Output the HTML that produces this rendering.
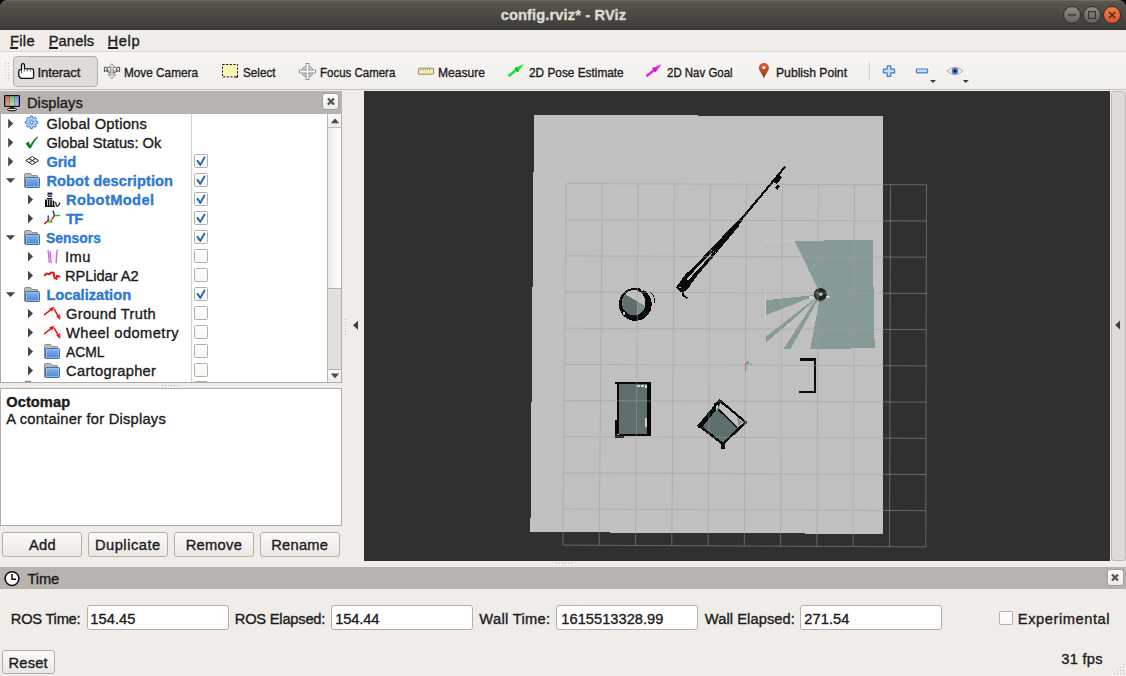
<!DOCTYPE html>
<html>
<head>
<meta charset="utf-8">
<title>config.rviz* - RViz</title>
<style>
*{box-sizing:border-box;margin:0;padding:0}
html,body{width:1126px;height:676px;overflow:hidden;background:#f0ece8}
body{font-family:"Liberation Sans",sans-serif;font-size:14.67px;color:#1b1b1b;position:relative}
.a{position:absolute}
.t{position:absolute;white-space:nowrap;line-height:19px;height:19px;-webkit-text-stroke:0.35px currentColor}
#title{left:0;top:0;width:1126px;height:30px;border-radius:7px 7px 0 0;background:linear-gradient(#5e5b53 0,#55524b 12%,#3f3e3a 92%,#3a3935 100%);border-top:1px solid #6d6a62}
.wb{border-radius:50%;width:18px;height:18px;top:6px;border:1px solid #2f2e2a;background:linear-gradient(#918f88,#605e57)}
#menu{left:0;top:30px;width:1126px;height:22px;background:#f0ece8;border-bottom:1px solid #dcd8d3}
#toolbar{left:0;top:52px;width:1126px;height:38px;background:linear-gradient(#f8f6f4,#f1efeb);border-bottom:1px solid #c4c0ba}
.hd{background:#b7b3af}
#tree{left:0;top:114px;width:342px;height:269px;background:#fff;border-left:1px solid #b0aca7;border-bottom:1px solid #b0aca7;border-right:1px solid #b0aca7;overflow:hidden}
.chk{position:absolute;left:193px;width:14px;height:14px;border:1px solid #b3afaa;border-radius:1.5px;background:linear-gradient(#fff,#f8f7f6)}
.closeb{position:absolute;width:17px;height:17px;border:1px solid #a39f9a;border-radius:3px;background:linear-gradient(#fefefe,#eceae8)}
.btn{position:absolute;top:532px;height:25px;width:80px;border:1px solid #b3aea8;border-radius:3px;background:linear-gradient(#fcfbfa,#eae7e3)}
.inp{position:absolute;top:605px;height:25px;width:142px;border:1px solid #b3afa9;border-radius:3px;background:#fff}
</style>
</head>
<body>
<div class="a" style="left:0;top:0;width:1126px;height:30px;background:#000"></div>
<div class="a" id="title"></div>
<div class="a wb" style="left:1063px"></div><div class="a wb" style="left:1083px"></div><div class="a wb" style="left:1103px;background:linear-gradient(#f47c4c,#df5226)"></div>
<svg class="a" style="left:1060px;top:0" width="66" height="30" viewBox="1060 0 66 30"><rect x="1068" y="14.2" width="8" height="1.5" fill="#3a3935"/><rect x="1088.6" y="11.6" width="6.8" height="6.8" fill="none" stroke="#3a3935" stroke-width="1.3"/><path d="M1109,11.9 L1115.2,18 M1115.2,11.9 L1109,18" stroke="#3a2a20" stroke-width="1.4"/></svg>
<div class="a" id="menu"></div>
<div class="a" id="toolbar"></div>
<svg class="a" style="left:0;top:52px" width="1126" height="38" viewBox="0 52 1126 38"><defs><linearGradient id="pin" x1="0" y1="0" x2="0" y2="1"><stop offset="0" stop-color="#e35a2e"/><stop offset="0.55" stop-color="#b9481f"/><stop offset="1" stop-color="#6e3414"/></linearGradient><linearGradient id="bl" x1="0" y1="0" x2="0" y2="1"><stop offset="0" stop-color="#7fb0ea"/><stop offset="1" stop-color="#4a86d4"/></linearGradient></defs><rect x="5" y="63" width="1" height="1" fill="#c9c5c0"/><rect x="5" y="66" width="1" height="1" fill="#c9c5c0"/><rect x="5" y="69" width="1" height="1" fill="#c9c5c0"/><rect x="5" y="72" width="1" height="1" fill="#c9c5c0"/><rect x="5" y="75" width="1" height="1" fill="#c9c5c0"/><rect x="5" y="78" width="1" height="1" fill="#c9c5c0"/><rect x="8" y="63" width="1" height="1" fill="#c9c5c0"/><rect x="8" y="66" width="1" height="1" fill="#c9c5c0"/><rect x="8" y="69" width="1" height="1" fill="#c9c5c0"/><rect x="8" y="72" width="1" height="1" fill="#c9c5c0"/><rect x="8" y="75" width="1" height="1" fill="#c9c5c0"/><rect x="8" y="78" width="1" height="1" fill="#c9c5c0"/><rect x="13.5" y="56.5" width="84" height="30" rx="3.5" fill="#dfdbd8" stroke="#b5b1ac"/><path d="M21.5,69.7 V65 Q21.5,63.6 23,63.6 Q24.5,63.6 24.5,65 V68.9 H32.1 Q33.6,68.9 33.6,70.4 V76.9 Q33.6,78.3 32.1,78.3 H20.9 L18.8,76.2 V71.1 Q18.8,69.7 20.3,69.7 Z" fill="#fff" stroke="#0c0c0c" stroke-width="1.3" stroke-linejoin="round"/><path d="M24.3,69.4 V71.7 M27.4,69.6 V71.7 M30.5,69.6 V71.7" stroke="#666" stroke-width="1" fill="none"/><path d="M21.6,69.9 V73.4" stroke="#444" stroke-width="1" fill="none"/><g stroke-linejoin="round"><path d="M104.4,67.3 H107.2 V71.2 L105.6,70.6 L104.4,72 Z" fill="#fafafa" stroke="#4e4e4e" stroke-width="1"/><path d="M119.6,67.3 H116.8 V71.2 L118.4,70.6 L119.6,72 Z" fill="#fafafa" stroke="#4e4e4e" stroke-width="1"/><ellipse cx="112" cy="68.7" rx="4.6" ry="2.3" fill="none" stroke="#6a6a6a" stroke-width="1" stroke-dasharray="1.6,1.2"/><path d="M106.4,70.8 Q112,75 117.6,70.8" fill="none" stroke="#5e5e5e" stroke-width="1.2"/><path d="M111.9,63.7 L115.2,67.5 H113.1 V74.6 H115.6 L111.9,78.8 L108.2,74.6 H110.7 V67.5 H108.6 Z" fill="#ededed" fill-opacity="0.9" stroke="#909090" stroke-width="1"/><rect x="111" y="66.4" width="1.8" height="9" fill="#c4c4c4"/></g><rect x="222.5" y="64.5" width="15" height="12.4" fill="#fbf9b6" stroke="#1a1a1a" stroke-width="1" stroke-dasharray="2.2,1.4"/><polygon points="238,74.6 238,77.4 235.2,77.4" fill="#111"/><g><circle cx="307.5" cy="71.5" r="5.5" fill="#f6f6f6" stroke="#8e8e8e" stroke-width="1.1"/><circle cx="307.5" cy="71.5" r="3.1" fill="none" stroke="#a0a0a0" stroke-width="1.5"/><rect x="306.2" y="63.5" width="2.6" height="16" fill="#fff" stroke="#8a8a8a" stroke-width="1"/><rect x="299.5" y="70.2" width="16" height="2.6" fill="#fff" stroke="#8a8a8a" stroke-width="1"/><rect x="306.7" y="64" width="1.6" height="15" fill="#fff"/><rect x="300" y="70.7" width="15" height="1.6" fill="#fff"/></g><rect x="418.4" y="68.2" width="15.2" height="6" rx="0.8" fill="#f3efb0" stroke="#8b8875" stroke-width="1"/><path d="M421,68.6 V70.6 M423.2,68.6 V70.2 M425.4,68.6 V70.6 M427.6,68.6 V70.2 M429.8,68.6 V70.6" stroke="#8b8875" stroke-width="0.8"/><polygon points="509.2,77.3 516.9,71.2 515.3,69.1 507.6,75.3" fill="#16e838"/><polygon points="517.7,72.2 523.9,63.9 514.5,68.1" fill="#16e838"/><polygon points="517.7,72.2 518.6,71.0 515.8,67.6 514.5,68.1" fill="#0a8a20" fill-opacity="0.75"/><polygon points="647.2,77.3 654.7,71.2 653.1,69.2 645.6,75.3" fill="#f21ee0"/><polygon points="655.6,72.2 661.7,63.9 652.3,68.2" fill="#f21ee0"/><polygon points="655.6,72.2 656.4,71.0 653.6,67.6 652.3,68.2" fill="#8a0a86" fill-opacity="0.75"/><path d="M763.9,63 C760.9,63 758.9,65.2 758.9,67.8 C758.9,71 762.6,74 763.9,78.6 C765.2,74 768.9,71 768.9,67.8 C768.9,65.2 766.9,63 763.9,63 Z" fill="url(#pin)"/><circle cx="763.9" cy="67.6" r="1.7" fill="#fff"/><rect x="869" y="62" width="1" height="19" fill="#cfcbc6"/><rect x="870" y="62" width="1" height="19" fill="#fbfaf9"/><path d="M887.2,65.8 H890.8 V69.2 H894.6 V72.8 H890.8 V76.4 H887.2 V72.8 H883.4 V69.2 H887.2 Z" fill="#c7dcf5" stroke="#3f7cc9" stroke-width="1.2" stroke-linejoin="round"/><rect x="916.4" y="69" width="11.2" height="3.8" rx="0.8" fill="#c7dcf5" stroke="#3f7cc9" stroke-width="1.2"/><polygon points="930,80 936,80 933,83" fill="#3a3a3a"/><path d="M947,71 Q955,63.6 963,71 Q955,78.4 947,71 Z" fill="#f4f4f4" stroke="#a8a8a8" stroke-width="1"/><circle cx="955" cy="71" r="3.3" fill="#4a78c8"/><circle cx="955" cy="71" r="1.5" fill="#1a1a2a"/><polygon points="962.8,80 968.8,80 965.8,83" fill="#3a3a3a"/></svg>
<div class="a" style="left:10px;top:47px;width:8px;height:2px;background:#1b1b1b"></div><div class="a" style="left:49px;top:47px;width:9px;height:2px;background:#1b1b1b"></div><div class="a" style="left:108px;top:47px;width:10px;height:2px;background:#1b1b1b"></div>
<div class="a hd" style="left:0;top:91px;width:342px;height:23px"></div>
<div class="closeb" style="left:322px;top:93px"></div>
<svg class="a" style="left:0;top:91px" width="342" height="23" viewBox="0 91 342 23"><defs><linearGradient id="mr" x1="0" y1="0" x2="0" y2="1"><stop offset="0" stop-color="#c46c6c"/><stop offset="1" stop-color="#ee9494"/></linearGradient><linearGradient id="mg" x1="0" y1="0" x2="0" y2="1"><stop offset="0" stop-color="#6cc06c"/><stop offset="1" stop-color="#a2eca2"/></linearGradient><linearGradient id="mb" x1="0" y1="0" x2="0" y2="1"><stop offset="0" stop-color="#8c8cdc"/><stop offset="1" stop-color="#b4b4fa"/></linearGradient></defs><rect x="4" y="95" width="16" height="12" rx="1.4" fill="#0c0c0c"/><rect x="5.2" y="96.2" width="4.6" height="9.6" fill="url(#mr)"/><rect x="9.8" y="96.2" width="4.5" height="9.6" fill="url(#mg)"/><rect x="14.3" y="96.2" width="4.5" height="9.6" fill="url(#mb)"/><path d="M10,107 H14 L13.2,108.4 H10.8 Z" fill="#0c0c0c"/><ellipse cx="12" cy="109.5" rx="4.6" ry="1.3" fill="#e8e8e8" stroke="#0c0c0c" stroke-width="1"/><path d="M328,98.5 L334,104.5 M334,98.5 L328,104.5" stroke="#555" stroke-width="2.4" stroke-linecap="butt"/></svg>
<div class="a" id="tree"><div class="chk" style="top:40px"></div><div class="chk" style="top:59px"></div><div class="chk" style="top:78px"></div><div class="chk" style="top:97px"></div><div class="chk" style="top:116px"></div><div class="chk" style="top:173px"></div><div class="chk" style="top:135px"></div><div class="chk" style="top:154px"></div><div class="chk" style="top:192px"></div><div class="chk" style="top:211px"></div><div class="chk" style="top:230px"></div><div class="chk" style="top:249px"></div><div class="chk" style="top:267px"></div><svg class="a" style="left:-1px;top:0" width="341" height="269" viewBox="0 0 341 269"><defs><linearGradient id="fg" x1="0" y1="0" x2="0" y2="1"><stop offset="0" stop-color="#8db5e8"/><stop offset="0.5" stop-color="#6b9ddb"/><stop offset="1" stop-color="#4c84cf"/></linearGradient></defs><polygon points="8.2,4.8 13.2,9.6 8.2,14.399999999999999" fill="#454545"/><polygon points="8.2,23.8 13.2,28.6 8.2,33.4" fill="#454545"/><polygon points="8.2,42.800000000000004 13.2,47.6 8.2,52.4" fill="#454545"/><polygon points="5.9,64.3 15.1,64.3 10.5,69.1" fill="#454545"/><polygon points="5.9,121.3 15.1,121.3 10.5,126.1" fill="#454545"/><polygon points="5.9,178.3 15.1,178.3 10.5,183.10000000000002" fill="#454545"/><polygon points="28,80.8 33,85.6 28,90.39999999999999" fill="#454545"/><polygon points="28,99.8 33,104.6 28,109.39999999999999" fill="#454545"/><polygon points="28,137.79999999999998 33,142.6 28,147.4" fill="#454545"/><polygon points="28,156.79999999999998 33,161.6 28,166.4" fill="#454545"/><polygon points="28,194.79999999999998 33,199.6 28,204.4" fill="#454545"/><polygon points="28,213.79999999999998 33,218.6 28,223.4" fill="#454545"/><polygon points="28,232.79999999999998 33,237.6 28,242.4" fill="#454545"/><polygon points="28,251.8 33,256.6 28,261.40000000000003" fill="#454545"/><g transform="translate(24,59)"><path d="M0.5,1.5 Q0.5,0.5 1.5,0.5 H6.5 L8,2.5 H13 Q13.5,2.5 13.5,3.5 V14 H0.5 Z" fill="#b9b9b6" stroke="#8d8d8a" stroke-width="1"/><rect x="1.5" y="4.5" width="14" height="10" rx="1" fill="url(#fg)" stroke="#3a6fb5" stroke-width="1"/><rect x="2.5" y="5.5" width="12" height="8" fill="none" stroke="#a9c8ee" stroke-opacity="0.7" stroke-width="1"/></g><g transform="translate(24,116)"><path d="M0.5,1.5 Q0.5,0.5 1.5,0.5 H6.5 L8,2.5 H13 Q13.5,2.5 13.5,3.5 V14 H0.5 Z" fill="#b9b9b6" stroke="#8d8d8a" stroke-width="1"/><rect x="1.5" y="4.5" width="14" height="10" rx="1" fill="url(#fg)" stroke="#3a6fb5" stroke-width="1"/><rect x="2.5" y="5.5" width="12" height="8" fill="none" stroke="#a9c8ee" stroke-opacity="0.7" stroke-width="1"/></g><g transform="translate(24,173)"><path d="M0.5,1.5 Q0.5,0.5 1.5,0.5 H6.5 L8,2.5 H13 Q13.5,2.5 13.5,3.5 V14 H0.5 Z" fill="#b9b9b6" stroke="#8d8d8a" stroke-width="1"/><rect x="1.5" y="4.5" width="14" height="10" rx="1" fill="url(#fg)" stroke="#3a6fb5" stroke-width="1"/><rect x="2.5" y="5.5" width="12" height="8" fill="none" stroke="#a9c8ee" stroke-opacity="0.7" stroke-width="1"/></g><g transform="translate(44,230)"><path d="M0.5,1.5 Q0.5,0.5 1.5,0.5 H6.5 L8,2.5 H13 Q13.5,2.5 13.5,3.5 V14 H0.5 Z" fill="#b9b9b6" stroke="#8d8d8a" stroke-width="1"/><rect x="1.5" y="4.5" width="14" height="10" rx="1" fill="url(#fg)" stroke="#3a6fb5" stroke-width="1"/><rect x="2.5" y="5.5" width="12" height="8" fill="none" stroke="#a9c8ee" stroke-opacity="0.7" stroke-width="1"/></g><g transform="translate(44,249)"><path d="M0.5,1.5 Q0.5,0.5 1.5,0.5 H6.5 L8,2.5 H13 Q13.5,2.5 13.5,3.5 V14 H0.5 Z" fill="#b9b9b6" stroke="#8d8d8a" stroke-width="1"/><rect x="1.5" y="4.5" width="14" height="10" rx="1" fill="url(#fg)" stroke="#3a6fb5" stroke-width="1"/><rect x="2.5" y="5.5" width="12" height="8" fill="none" stroke="#a9c8ee" stroke-opacity="0.7" stroke-width="1"/></g><g transform="translate(31.5,8.3)"><path d="M-1.12,-4.67 L-0.99,-6.22 L0.99,-6.22 L1.12,-4.67 L2.51,-4.09 L3.70,-5.10 L5.10,-3.70 L4.09,-2.51 L4.67,-1.12 L6.22,-0.99 L6.22,0.99 L4.67,1.12 L4.09,2.51 L5.10,3.70 L3.70,5.10 L2.51,4.09 L1.12,4.67 L0.99,6.22 L-0.99,6.22 L-1.12,4.67 L-2.51,4.09 L-3.70,5.10 L-5.10,3.70 L-4.09,2.51 L-4.67,1.12 L-6.22,0.99 L-6.22,-0.99 L-4.67,-1.12 L-4.09,-2.51 L-5.10,-3.70 L-3.70,-5.10 L-2.51,-4.09 Z" fill="#c3d6f1" stroke="#3d78cf" stroke-width="1" stroke-linejoin="round"/><circle r="2.6" fill="none" stroke="#8fb2e6" stroke-width="1.3"/><circle r="1.5" fill="#fdfdff" stroke="#3d78cf" stroke-width="0.9"/></g><path d="M25.6,29.4 L28.8,27.6 L30.2,31 Q33,25.5 37.6,22.2 L38,23.2 Q33.5,28 30.8,34.2 L29,34.2 Z" fill="#17801b"/><g fill="none" stroke="#222" stroke-width="1"><path d="M25.8,46.6 L32.3,42.6 L38.8,46.6 L32.3,50.6 Z"/><path d="M29,44.6 L35.6,48.6 M35.6,44.6 L29,48.6"/></g><g fill="#111"><rect x="47.6" y="78.6" width="4.6" height="1.4"/><rect x="47" y="80.2" width="5.6" height="1.2" fill="#3b62c4"/><rect x="47.8" y="81.6" width="4" height="1.2"/><rect x="47" y="84" width="5.4" height="1.4"/><rect x="45" y="85.6" width="2.2" height="7.2"/><rect x="48" y="85.6" width="1.4" height="7.2"/><rect x="50.2" y="85.6" width="1.6" height="7.2"/><rect x="52.6" y="86.6" width="1.6" height="6.2"/><rect x="45" y="91.6" width="10" height="1.3"/><path d="M54.6,88.2 Q56.5,88.6 56.2,91 Q56,92.6 57.6,92.2 Q59.4,91.2 60,88.4" fill="none" stroke="#111" stroke-width="1.1"/></g><g fill="none" stroke-width="1.5" stroke-linecap="round"><path d="M53.2,97.2 L54.4,101.4" stroke="#1430e0"/><path d="M54.4,101.6 L59.6,101.6" stroke="#10d020"/><path d="M54.4,101.8 L51,106.4" stroke="#e01818"/><path d="M48.2,102 L48.2,106.4" stroke="#2040f0"/><path d="M48.4,107.4 L52,108" stroke="#10d020"/><path d="M48,106.8 L44.6,109.6" stroke="#f01010"/><path d="M49.6,105.8 L51.2,105" stroke="#f0e020"/></g><g fill="none" stroke="#d357de" stroke-width="1.1"><path d="M48,135.6 L49.2,149"/><path d="M50.2,137 L51.2,149.4"/><path d="M57.2,135.2 L56.2,149.4"/><path d="M49,138 L50.4,148" stroke-opacity="0.5"/><path d="M56.4,138 L55.8,148" stroke-opacity="0.5"/></g><path d="M44.8,161.2 L46.6,159.4 L49.2,160.4 L51,158.6 L53.6,158.8 L54.6,164 L56.4,165 L57,162 L59.6,162.6" fill="none" stroke="#e61212" stroke-width="2" stroke-linejoin="round" stroke-linecap="round"/><g stroke="#e81414" stroke-width="1.5" fill="#e81414" stroke-linecap="round"><path d="M44.6,200.6 L52.4,194.4" fill="none"/><path d="M53.6,193.2 L49.6,194.6 L51.8,197 Z" stroke-width="0.6"/><path d="M54.2,195.2 L59,203.6" fill="none"/><path d="M59.8,205.2 L56.6,202.4 L59.6,200.8 Z" stroke-width="0.6"/></g><g stroke="#e81414" stroke-width="1.5" fill="#e81414" stroke-linecap="round"><path d="M44.6,219.6 L52.4,213.4" fill="none"/><path d="M53.6,212.2 L49.6,213.6 L51.8,216 Z" stroke-width="0.6"/><path d="M54.2,214.2 L59,222.6" fill="none"/><path d="M59.8,224.2 L56.6,221.4 L59.6,219.8 Z" stroke-width="0.6"/></g><rect x="24.8" y="266.8" width="6.4" height="1.4" fill="#8a8a88"/><line x1="191.5" y1="0" x2="191.5" y2="269" stroke="#d4d1cd" stroke-width="1"/><path d="M197.5,46.9 L200.3,50.9 L204.5,43.5" fill="none" stroke="#2364b4" stroke-width="1.9" stroke-linecap="round" stroke-linejoin="round"/><path d="M197.5,65.9 L200.3,69.9 L204.5,62.5" fill="none" stroke="#2364b4" stroke-width="1.9" stroke-linecap="round" stroke-linejoin="round"/><path d="M197.5,84.9 L200.3,88.9 L204.5,81.5" fill="none" stroke="#2364b4" stroke-width="1.9" stroke-linecap="round" stroke-linejoin="round"/><path d="M197.5,103.9 L200.3,107.9 L204.5,100.5" fill="none" stroke="#2364b4" stroke-width="1.9" stroke-linecap="round" stroke-linejoin="round"/><path d="M197.5,122.9 L200.3,126.9 L204.5,119.5" fill="none" stroke="#2364b4" stroke-width="1.9" stroke-linecap="round" stroke-linejoin="round"/><path d="M197.5,179.9 L200.3,183.9 L204.5,176.5" fill="none" stroke="#2364b4" stroke-width="1.9" stroke-linecap="round" stroke-linejoin="round"/></svg><div class="a" style="left:326px;top:0;width:14px;height:268px;background:linear-gradient(90deg,#e9e7e4,#fdfdfc 70%);border-left:1px solid #b8b4af"></div><div class="a" style="left:327px;top:0;width:13px;height:14px;background:linear-gradient(#fbfafa,#eeece9);border-bottom:1px solid #c2beb9"></div><div class="a" style="left:327px;top:255px;width:13px;height:13px;background:linear-gradient(#fbfafa,#eeece9)"></div><div class="a" style="left:327px;top:174px;width:13px;height:82px;background:#e2e0dd;border-top:1px solid #b5b1ab;border-bottom:1px solid #b5b1ab"></div><svg class="a" style="left:326.5px;top:0" width="14" height="268"><polygon points="2.8,9.2 11.2,9.2 7,4.6" fill="#4a4a4a"/><polygon points="2.8,259.6 11.2,259.6 7,264.2" fill="#4a4a4a"/></svg></div>
<svg class="a" style="left:160px;top:384px" width="24" height="3"><g fill="#bab6b1"><rect x="2" y="1" width="1" height="1"/><rect x="5" y="1" width="1" height="1"/><rect x="8" y="1" width="1" height="1"/><rect x="11" y="1" width="1" height="1"/><rect x="14" y="1" width="1" height="1"/><rect x="17" y="1" width="1" height="1"/></g></svg>
<div class="a" style="left:0;top:388px;width:342px;height:138px;background:#fff;border:1px solid #b0aca7"></div>
<div class="btn" style="left:2px"></div><div class="btn" style="left:88px"></div><div class="btn" style="left:174px"></div><div class="btn" style="left:260px"></div>
<svg class="a" style="left:342px;top:91px" width="22" height="470"><g fill="#bab6b1"><rect x="3" y="228" width="1" height="1"/><rect x="3" y="231" width="1" height="1"/><rect x="3" y="234" width="1" height="1"/><rect x="3" y="237" width="1" height="1"/><rect x="3" y="240" width="1" height="1"/><rect x="3" y="243" width="1" height="1"/></g><polygon points="16,229.8 16,238.8 11,234.3" fill="#3c3c3c"/></svg>
<svg class="a" style="left:364px;top:91px" width="746" height="470" viewBox="364 91 746 470">
<rect x="364" y="91" width="746" height="470" fill="#303030"/>
<g shape-rendering="crispEdges">
<polygon points="534,114.8 883.3,116.3 882.6,533.9 530.4,532.1" fill="#c0c0c0"/>
<!-- lidar fan -->
<g fill="#869b98">
<polygon points="820.5,294.5 794.7,240.8 872.6,240 874.7,348 810.2,349.4"/>
<polygon points="819,294.5 765.8,300.3 765.8,315.1"/>
<polygon points="817,297 766,336.6 766,342.5 818,298.5"/>
<polygon points="816,299 783.2,349.4 790.3,349.4 818.5,299"/>
</g>
<!-- diagonal wall -->
<g fill="#0a0a0a" stroke="none">
<polygon points="784.4,166 786,167.3 740.8,221.6 739,220.2"/>
<polygon points="740.8,217.5 743.2,219.6 734.5,230.2 731.8,228"/>
<polygon points="779.4,175 782,177.6 776.8,184.2 773.2,181.6"/>
<polygon points="777.2,184.6 779.8,186 777.6,189.8 775,188.2"/>
<polygon points="736,222 739.8,225 716.4,253 710.4,249.5"/>
<polygon points="709,250 713.6,251 700.9,263.3 691,274.4 681,285.5 676,287.4 685.5,274.4 697.2,263.3 704.4,255.5"/>
<polygon points="713,251.5 716.4,253 707.7,263.3 698.3,274.4 690,285.5 686,283.5 693.3,274.4 703.8,263.3 710.5,255.5"/>
<polygon points="675.8,287.2 686.4,279.4 690.8,283 690,286 685,291 681.4,292.4"/>
<polygon points="681.5,291 683.5,291 684,295 687.8,297.5 686.8,299 682.3,296"/>
</g>
<rect x="679" y="286.8" width="1.6" height="1.4" fill="#c0c0c0"/>
<!-- circle obstacle -->
<clipPath id="cin"><ellipse cx="633.8" cy="302.6" rx="11.7" ry="12.6"/></clipPath>
<ellipse cx="635.3" cy="304.3" rx="16.4" ry="16.5" fill="#0a0a0a"/>
<ellipse cx="633.8" cy="302.6" rx="11.7" ry="12.6" fill="#c0c0c0"/>
<g clip-path="url(#cin)">
<polygon points="615,288.2 625.4,294.3 645.8,306.4 650,320 615,320" fill="#5e6f6e"/>
<polygon points="637.2,301.3 645.8,306.4 648,316 637.2,318" fill="#7a8f8d"/>
</g>
<path d="M650.5,292.5 Q654.8,295.5 654.6,303" fill="none" stroke="#0a0a0a" stroke-width="1.1"/>
<path d="M651.2,294 Q653.6,297 653.4,302" fill="none" stroke="#c0c0c0" stroke-width="1.2"/>
<rect x="622.6" y="312.4" width="2" height="2.6" fill="#c0c0c0"/>
<rect x="640.6" y="289.2" width="2.4" height="1.6" fill="#c0c0c0"/>
<!-- rect obstacle -->
<rect x="617" y="382" width="33" height="54" fill="#5e6f6e"/>
<g fill="#0a0a0a">
<rect x="615.1" y="381.7" width="35.9" height="2.5"/>
<rect x="616.8" y="382" width="2.3" height="54"/>
<rect x="615.1" y="420" width="3.9" height="16.2"/>
<rect x="647.1" y="382" width="3.9" height="54.2"/>
<rect x="615.1" y="433.8" width="35.9" height="2.4"/>
<rect x="615.1" y="436.2" width="9" height="1.5"/>
</g>
<rect x="637.4" y="385.4" width="2.6" height="2" fill="#d4d8d7"/><rect x="641.2" y="385.4" width="2.4" height="2" fill="#d4d8d7"/><rect x="644.6" y="385.4" width="2.5" height="2.4" fill="#d4d8d7"/>
<rect x="645.3" y="418" width="1.8" height="9" fill="#c8cccb"/>
<rect x="617" y="434" width="2" height="1.4" fill="#c0c0c0"/>
<!-- diamond obstacle -->
<polygon points="719.7,400.5 745.6,422.3 722.8,444 699,425.5" fill="#5e6f6e" stroke="#0a0a0a" stroke-width="2.4"/>
<polygon points="720.6,402.6 744,422.3 737.8,427.4 718.6,409.4" fill="#c0c0c0"/>
<polygon points="737,417.5 742.8,422.3 738.2,426.5" fill="#869b98"/>
<line x1="718.6" y1="409.6" x2="737.4" y2="427.6" stroke="#0a0a0a" stroke-width="1.6"/><polygon points="698,425.8 719.2,399.6 721.2,401.4 717.4,408.2 701.8,427.8" fill="#0a0a0a"/>
<polygon points="713.6,404.2 719.7,399.2 726.6,405 721.6,404.6 719.8,402.8 717.4,405 715.6,409" fill="#0a0a0a"/><rect x="716.4" y="404.6" width="1.4" height="5" fill="#d0d4d3" transform="rotate(14 717 407)"/>
<rect x="721.3" y="443" width="3.4" height="6" fill="#0a0a0a"/>
<rect x="697.6" y="423.5" width="4" height="4.5" fill="#0a0a0a"/>
<rect x="744.5" y="420.6" width="2.6" height="3.4" fill="#444"/>
<!-- bracket -->
<path d="M800,359.5 H815 V392.2 H799.4" fill="none" stroke="#0a0a0a" stroke-width="2.2"/>
</g>
<line x1="765.5" y1="291" x2="765.5" y2="321" stroke="#cfcfcf" stroke-width="0.8"/><line x1="765" y1="241.3" x2="795" y2="241" stroke="#d2d2d2" stroke-width="0.7" stroke-dasharray="3,2"/>
<!-- odom line + axes -->
<line x1="746" y1="364" x2="818" y2="297" stroke="#cdcba0" stroke-width="0.9" stroke-opacity="0.85"/>
<line x1="745.6" y1="364" x2="745.6" y2="370.5" stroke="#e0405a" stroke-width="1.2"/>
<line x1="745.6" y1="364" x2="752.5" y2="364" stroke="#38d24a" stroke-width="1.2"/>
<line x1="745.6" y1="364" x2="748.6" y2="361.3" stroke="#e020c0" stroke-width="1.1"/>
<!-- robot -->
<circle cx="820.3" cy="294.4" r="6.4" fill="#242424"/>
<ellipse cx="817.1" cy="294.8" rx="1.5" ry="3.2" fill="#2c5a2c"/>
<rect x="815" y="294" width="0.9" height="1.8" fill="#2a3ea0"/>
<circle cx="820.8" cy="294.3" r="1.8" fill="#c4c4c4"/>
<rect x="809.2" y="296.4" width="4.2" height="1.4" fill="#f0f0f0"/>
<rect x="826.2" y="296.2" width="3.4" height="1.5" fill="#f4f4f4"/>
<polygon points="818.4,300.8 820.4,300.8 819.4,302.4" fill="#e01010"/>
<!-- grid -->
<g stroke="rgb(160,160,164)" stroke-opacity="0.5" stroke-width="1"><line x1="566.3" y1="183.6" x2="562.9" y2="545.1"/><line x1="566.3" y1="183.6" x2="926.5" y2="184.8"/><line x1="602.3" y1="183.7" x2="599.2" y2="545.3"/><line x1="566.0" y1="219.8" x2="926.4" y2="221.0"/><line x1="638.3" y1="183.8" x2="635.5" y2="545.5"/><line x1="565.6" y1="255.9" x2="926.4" y2="257.2"/><line x1="674.4" y1="184.0" x2="671.8" y2="545.6"/><line x1="565.3" y1="292.1" x2="926.3" y2="293.4"/><line x1="710.4" y1="184.1" x2="708.1" y2="545.8"/><line x1="564.9" y1="328.2" x2="926.2" y2="329.6"/><line x1="746.4" y1="184.2" x2="744.3" y2="546.0"/><line x1="564.6" y1="364.4" x2="926.1" y2="365.9"/><line x1="782.4" y1="184.3" x2="780.6" y2="546.2"/><line x1="564.3" y1="400.5" x2="926.1" y2="402.1"/><line x1="818.4" y1="184.4" x2="816.9" y2="546.4"/><line x1="563.9" y1="436.6" x2="926.0" y2="438.3"/><line x1="854.5" y1="184.6" x2="853.2" y2="546.5"/><line x1="563.6" y1="472.8" x2="925.9" y2="474.5"/><line x1="890.5" y1="184.7" x2="889.5" y2="546.7"/><line x1="563.2" y1="509.0" x2="925.9" y2="510.7"/><line x1="926.5" y1="184.8" x2="925.8" y2="546.9"/><line x1="562.9" y1="545.1" x2="925.8" y2="546.9"/></g>
</svg>
<div class="a" style="left:1111px;top:91px;width:15px;height:470px;background:#dedad7;border:1px solid #bcb8b3;border-radius:3px"></div>
<svg class="a" style="left:1111px;top:91px" width="15" height="470"><polygon points="9,229.6 9,238.4 4.2,234" fill="#3c3c3c"/></svg>
<svg class="a" style="left:552px;top:562px" width="24" height="3"><g fill="#bab6b1"><rect x="4" y="1" width="1" height="1"/><rect x="7" y="1" width="1" height="1"/><rect x="10" y="1" width="1" height="1"/><rect x="13" y="1" width="1" height="1"/><rect x="16" y="1" width="1" height="1"/><rect x="19" y="1" width="1" height="1"/></g></svg>
<div class="a hd" style="left:0;top:567px;width:1126px;height:22px"></div>
<div class="closeb" style="left:1107px;top:569px"></div>
<svg class="a" style="left:0;top:567px" width="1126" height="22" viewBox="0 567 1126 22"><circle cx="12" cy="578.6" r="6.9" fill="#fff" stroke="#151515" stroke-width="1.6"/><path d="M12,574 V579.2 H16" fill="none" stroke="#151515" stroke-width="1.5"/><path d="M1112,574.5 L1118,580.5 M1118,574.5 L1112,580.5" stroke="#555" stroke-width="2.4" stroke-linecap="butt"/></svg>
<div class="inp" style="left:87px"></div><div class="inp" style="left:331px"></div><div class="inp" style="left:556px"></div><div class="inp" style="left:800px"></div>
<div class="chk" style="left:999px;top:611px"></div>
<div class="btn" style="left:2px;top:650px;width:53px;height:24px"></div>
<svg class="a" style="left:1112px;top:662px" width="14" height="14"><g fill="#bdb9b4"><rect x="11" y="11" width="1" height="1"/><rect x="11" y="8" width="1" height="1"/><rect x="11" y="5" width="1" height="1"/><rect x="11" y="2" width="1" height="1"/><rect x="8" y="11" width="1" height="1"/><rect x="8" y="8" width="1" height="1"/><rect x="8" y="5" width="1" height="1"/><rect x="5" y="11" width="1" height="1"/><rect x="5" y="8" width="1" height="1"/><rect x="2" y="11" width="1" height="1"/></g></svg>
<span class="t" id="tt" style="left:500.70px;top:6.42px;letter-spacing:0.116px;font-weight:bold;color:#dfdbd2;">config.rviz* - RViz</span>
<span class="t" id="m1" style="left:10.00px;top:32.22px;letter-spacing:0.312px;">File</span>
<span class="t" id="m2" style="left:48.70px;top:32.22px;letter-spacing:0.123px;">Panels</span>
<span class="t" id="m3" style="left:107.50px;top:32.22px;letter-spacing:0.669px;">Help</span>
<span class="t" id="b1" style="left:37.50px;top:62.63px;font-size:13.2px;letter-spacing:-0.159px;">Interact</span>
<span class="t" id="b2" style="left:123.71px;top:62.63px;transform:scaleX(0.8935);transform-origin:0 0;font-size:13.2px;">Move Camera</span>
<span class="t" id="b3" style="left:242.70px;top:62.63px;transform:scaleX(0.8895);transform-origin:0 0;font-size:13.2px;">Select</span>
<span class="t" id="b4" style="left:319.63px;top:62.63px;transform:scaleX(0.8706);transform-origin:0 0;font-size:13.2px;">Focus Camera</span>
<span class="t" id="b5" style="left:437.69px;top:62.63px;transform:scaleX(0.9145);transform-origin:0 0;font-size:13.2px;">Measure</span>
<span class="t" id="b6" style="left:528.60px;top:62.63px;transform:scaleX(0.8972);transform-origin:0 0;font-size:13.2px;">2D Pose Estimate</span>
<span class="t" id="b7" style="left:666.70px;top:62.63px;transform:scaleX(0.8695);transform-origin:0 0;font-size:13.2px;">2D Nav Goal</span>
<span class="t" id="b8" style="left:775.88px;top:62.63px;transform:scaleX(0.9225);transform-origin:0 0;font-size:13.2px;">Publish Point</span>
<span class="t" id="dh" style="left:26.90px;top:94.32px;letter-spacing:0.078px;">Displays</span>
<span class="t" id="r1" style="left:46.40px;top:114.82px;letter-spacing:0.268px;">Global Options</span>
<span class="t" id="r2" style="left:46.40px;top:133.82px;">Global Status: Ok</span>
<span class="t" id="r3" style="left:46.40px;top:152.82px;letter-spacing:-0.092px;font-weight:bold;color:#2e7ad1;">Grid</span>
<span class="t" id="r4" style="left:46.40px;top:171.82px;letter-spacing:0.079px;font-weight:bold;color:#2e7ad1;">Robot description</span>
<span class="t" id="r5" style="left:66.00px;top:190.82px;letter-spacing:0.368px;font-weight:bold;color:#2e7ad1;">RobotModel</span>
<span class="t" id="r6" style="left:66.00px;top:209.82px;letter-spacing:-0.653px;font-weight:bold;color:#2e7ad1;">TF</span>
<span class="t" id="r7" style="left:46.40px;top:228.82px;transform:scaleX(0.9500);transform-origin:0 0;font-weight:bold;color:#2e7ad1;">Sensors</span>
<span class="t" id="r8" style="left:65.00px;top:247.82px;letter-spacing:0.510px;">Imu</span>
<span class="t" id="r9" style="left:65.00px;top:266.82px;letter-spacing:-0.066px;">RPLidar A2</span>
<span class="t" id="r10" style="left:46.40px;top:285.82px;font-weight:bold;color:#2e7ad1;">Localization</span>
<span class="t" id="r11" style="left:66.00px;top:304.82px;letter-spacing:0.303px;">Ground Truth</span>
<span class="t" id="r12" style="left:66.00px;top:323.82px;letter-spacing:0.448px;">Wheel odometry</span>
<span class="t" id="r13" style="left:66.00px;top:342.82px;transform:scaleX(0.9465);transform-origin:0 0;">ACML</span>
<span class="t" id="r14" style="left:66.00px;top:361.82px;letter-spacing:0.330px;">Cartographer</span>
<span class="t" id="d1" style="left:6.20px;top:392.82px;letter-spacing:0.072px;font-weight:bold;">Octomap</span>
<span class="t" id="d2" style="left:6.20px;top:410.02px;letter-spacing:0.242px;">A container for Displays</span>
<span class="t" id="p1" style="left:29.10px;top:536.12px;letter-spacing:0.187px;">Add</span>
<span class="t" id="p2" style="left:94.90px;top:536.12px;letter-spacing:0.531px;">Duplicate</span>
<span class="t" id="p3" style="left:185.70px;top:536.12px;letter-spacing:0.315px;">Remove</span>
<span class="t" id="p4" style="left:271.30px;top:536.12px;letter-spacing:0.231px;">Rename</span>
<span class="t" id="th" style="left:27.40px;top:570.42px;letter-spacing:-0.058px;">Time</span>
<span class="t" id="l1" style="left:10.80px;top:609.92px;letter-spacing:-0.232px;">ROS Time:</span>
<span class="t" id="v1" style="left:90.30px;top:609.92px;letter-spacing:0.065px;">154.45</span>
<span class="t" id="l2" style="left:234.80px;top:609.92px;letter-spacing:-0.209px;">ROS Elapsed:</span>
<span class="t" id="v2" style="left:335.30px;top:609.92px;letter-spacing:-0.135px;">154.44</span>
<span class="t" id="l3" style="left:479.30px;top:609.92px;letter-spacing:0.328px;">Wall Time:</span>
<span class="t" id="v3" style="left:561.30px;top:609.92px;letter-spacing:0.022px;">1615513328.99</span>
<span class="t" id="l4" style="left:704.80px;top:609.92px;letter-spacing:0.084px;">Wall Elapsed:</span>
<span class="t" id="v4" style="left:804.30px;top:609.92px;letter-spacing:0.065px;">271.54</span>
<span class="t" id="ex" style="left:1017.80px;top:609.92px;letter-spacing:0.566px;">Experimental</span>
<span class="t" id="rs" style="left:8.60px;top:654.12px;letter-spacing:0.196px;">Reset</span>
<span class="t" id="fp" style="left:1061.30px;top:649.92px;letter-spacing:0.281px;">31 fps</span>
</body>
</html>
